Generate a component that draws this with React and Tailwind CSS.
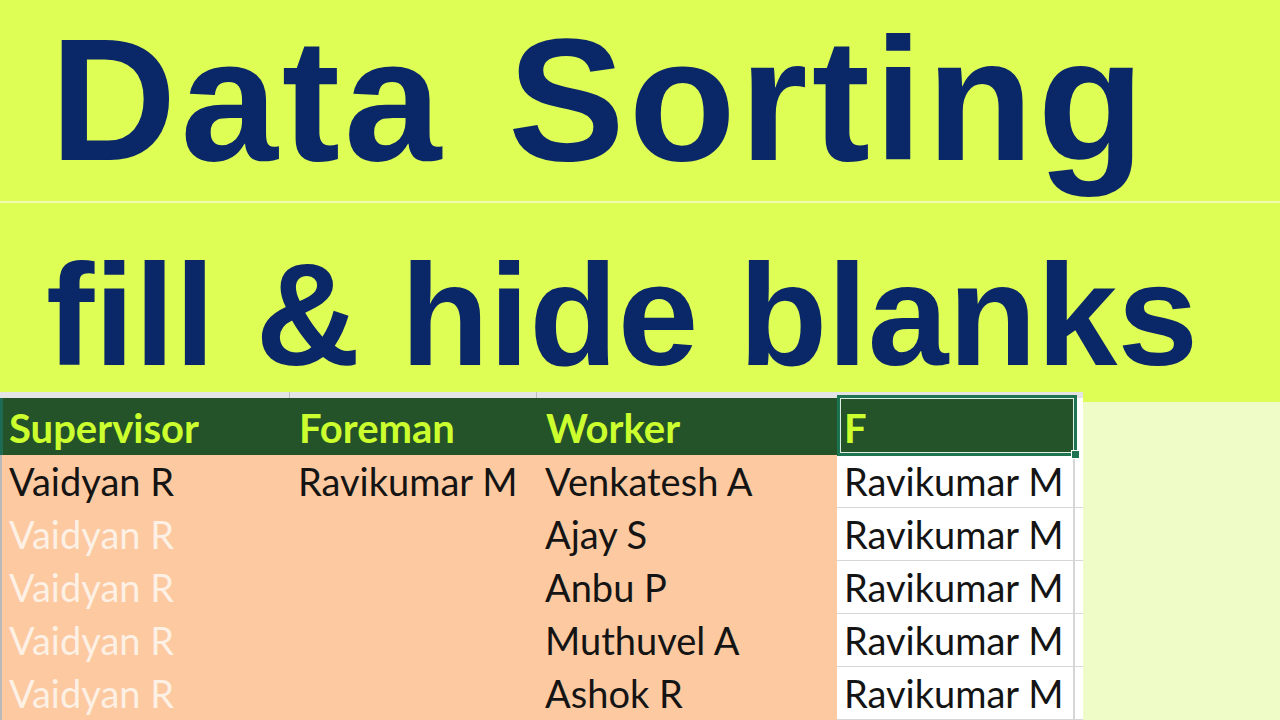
const HEAD = ["Supervisor", "Foreman", "Worker"];

const ROWS = [
  { sup: "Vaidyan R", faded: false, fore: "Ravikumar M", worker: "Venkatesh A" },
  { sup: "Vaidyan R", faded: true, fore: "", worker: "Ajay S" },
  { sup: "Vaidyan R", faded: true, fore: "", worker: "Anbu P" },
  { sup: "Vaidyan R", faded: true, fore: "", worker: "Muthuvel A" },
  { sup: "Vaidyan R", faded: true, fore: "", worker: "Ashok R" },
];

const cellFont = { fontFamily: "Lato, 'Open Sans', sans-serif" };

export default function App() {
  return (
    <div className="h-[720px] w-[1280px] overflow-hidden bg-[#defe56]">
      <div className="h-[201px] pl-[50px] pt-[12px]">
        <h1 className="font-['Liberation_Sans',Arial,sans-serif] text-[175px] font-bold leading-none tracking-[4px] text-[#0a2868] [word-spacing:10px]">
          Data Sorting
        </h1>
      </div>
      <div className="h-[2px] bg-[#f1fbb4]" />
      <div className="h-[189px] pl-[46px] pt-[40px]">
        <h2 className="font-['Liberation_Sans',Arial,sans-serif] text-[145px] font-bold leading-none text-[#0a2868]">
          fill &amp; hide blanks
        </h2>
      </div>

      <div className="flex h-[328px]" style={cellFont}>
        <div className="w-[1083px]">
          <div className="flex h-[6px] bg-[#e4e4e4]">
            <div className="w-[290px] border-r border-[#bdbdbd]" />
            <div className="w-[247px] border-r border-[#bdbdbd]" />
            <div className="w-[300px]" />
          </div>

          <div className="flex h-[57px] border-l-[3px] border-[#1d6b52] bg-[#245229] text-[40px] font-bold text-[#ccff2e]">
            <div className="flex w-[287px] items-center pl-[6px] pt-[2px]">{HEAD[0]}</div>
            <div className="flex w-[247px] items-center pl-[9px] pt-[2px]">{HEAD[1]}</div>
            <div className="flex w-[300px] items-center pl-[9px] pt-[2px]">{HEAD[2]}</div>
            <div className="relative -mt-[3px] flex h-[61px] w-[240px] items-center border-[3px] border-[#1e7350] bg-[#245229] pl-[4px] pt-[4px]">
              <div className="absolute inset-0 border border-[#dfeee4]" />
              <span className="relative">F</span>
              <div className="absolute -bottom-[6px] -right-[6px] h-[9px] w-[9px] border border-white bg-[#1e7350]" />
            </div>
            <div className="flex-1 bg-white" />
          </div>

          {ROWS.map((r, i) => (
            <div key={i} className="flex h-[53px] text-[38px] text-[#141414]">
              <div className="flex w-[837px] border-l-2 border-[#b9b9b9] bg-[#fcc9a0]">
                <div
                  className={
                    "flex w-[288px] items-center pl-[7px] " +
                    (r.faded ? "text-[#fdf0e4]" : "text-[#141414]")
                  }
                >
                  {r.sup}
                </div>
                <div className="flex w-[247px] items-center pl-[8px]">{r.fore}</div>
                <div className="flex w-[300px] items-center pl-[8px]">{r.worker}</div>
              </div>
              <div className="flex w-[238px] items-center border-b border-r-2 border-[#d6d6d6] bg-white pl-[7px]">
                Ravikumar M
              </div>
              <div className="flex-1 border-b border-[#d6d6d6] bg-white" />
            </div>
          ))}
        </div>
        <div className="flex flex-1 flex-col">
          <div className="h-[10px] bg-[#defe56]" />
          <div className="flex-1 bg-[#f0fcc8]" />
        </div>
      </div>
    </div>
  );
}
